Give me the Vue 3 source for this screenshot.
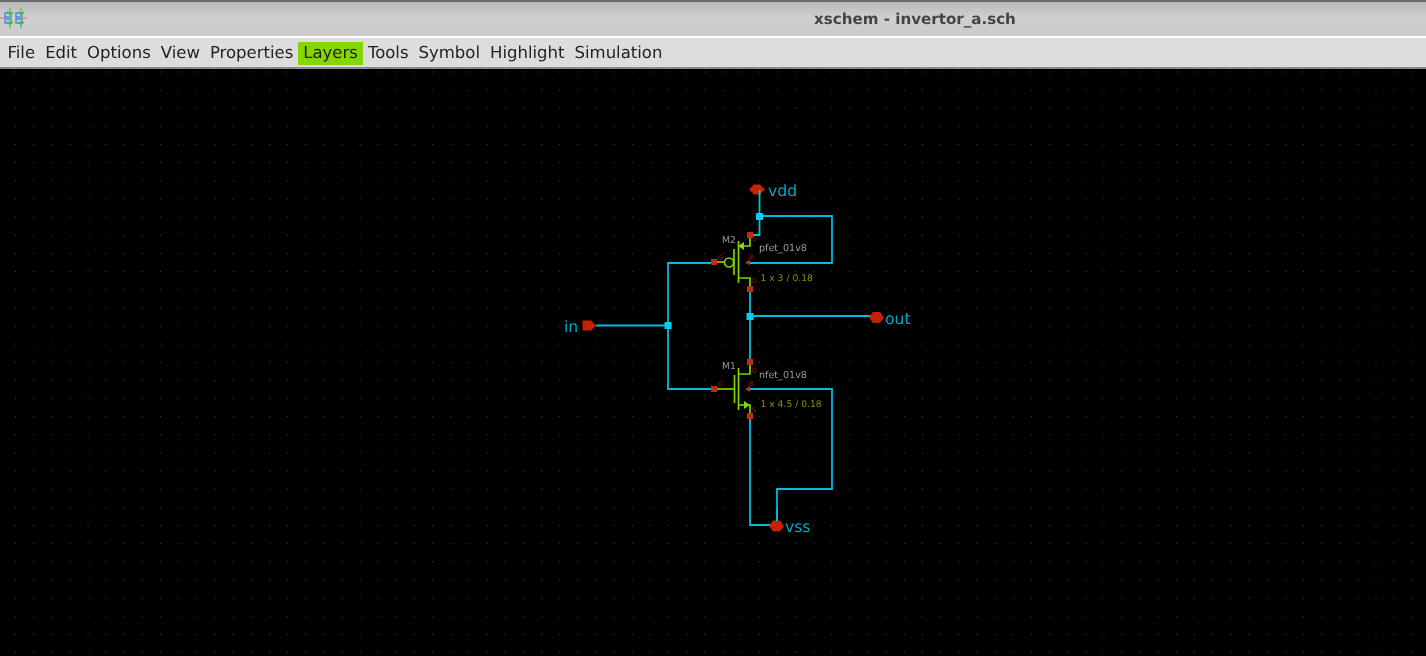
<script setup>
const menus = ['File', 'Edit', 'Options', 'View', 'Properties', 'Layers', 'Tools', 'Symbol', 'Highlight', 'Simulation']

// schematic geometry, in page pixels minus the canvas top (y - 69)
const wires = [
  '759.5,121 759.5,166 750,166',
  '759.5,147 832,147 832,194 750,194',
  '750,220 750,293',
  '750,247 875,247',
  '596,256.5 668,256.5',
  '714,194 668,194 668,320 714,320',
  '750,320 832,320 832,420 777,420 777,456',
  '750,347 750,456 775,456',
]
const junctions = [[759.5, 147.5], [750, 247.5], [668, 256.5]]
const fets = [
  '714,193 724,193',
  '739,177 750,177 750,166',
  '739,209 750,209 750,220',
  '714,320 734,320',
  '739,305 750,305 750,293',
  '739,336 750,336 750,347',
]
const pads = [[750, 166], [750, 220], [714, 193], [750, 293], [750, 347], [714, 320]]
const labels = [
  { x: 722, y: 174, t: 'M2', c: 'tag' },
  { x: 759, y: 182, t: 'pfet_01v8', c: 'part' },
  { x: 760.5, y: 212, t: '1 x 3 / 0.18', c: 'size' },
  { x: 722, y: 300, t: 'M1', c: 'tag' },
  { x: 759, y: 309, t: 'nfet_01v8', c: 'part' },
  { x: 760.5, y: 338, t: '1 x 4.5 / 0.18', c: 'size' },
  { x: 752, y: 172, t: 'S', c: 'pin' },
  { x: 749, y: 190, t: 'B', c: 'pin' },
  { x: 718, y: 191, t: 'G', c: 'pin' },
  { x: 752, y: 214, t: 'D', c: 'pin' },
  { x: 752, y: 304, t: 'D', c: 'pin' },
  { x: 749, y: 317, t: 'B', c: 'pin' },
  { x: 718, y: 317, t: 'G', c: 'pin' },
  { x: 752, y: 343, t: 'S', c: 'pin' },
]
const names = [
  { x: 768, y: 127, t: 'vdd' },
  { x: 885, y: 254.5, t: 'out' },
  { x: 564, y: 263, t: 'in' },
  { x: 785, y: 463, t: 'vss' },
]
</script>

<template>
  <div class="window">
    <header class="titlebar">
      <svg class="logo" width="28" height="20" viewBox="0 0 28 20">
        <path d="M0 10h4M23 10h4" stroke="#e08a80" stroke-width="1.5" fill="none" />
        <path d="M5 5h6v4H5zM5 11h6v4H5zM16 5h6v4h-6zM16 11h6v4h-6z" stroke="#4f86ea" stroke-width="1.4" fill="none" />
        <path d="M10 0v20M21 0v20" stroke="#5fc060" stroke-width="1.5" fill="none" />
        <path d="M7 4l3 2 3-2M7 14l3 2 3-2M18 4l3 2 3-2M18 14l3 2 3-2" stroke="#3fae50" stroke-width="1.3" fill="none" />
      </svg>
      <span class="title">xschem - invertor_a.sch</span>
    </header>
    <nav class="menubar">
      <span v-for="m in menus" :key="m" class="menu" :class="{ active: m === 'Layers' }">{{ m }}</span>
    </nav>
    <svg class="canvas" width="1426" height="587" viewBox="0 0 1426 587">
      <defs>
        <pattern id="grid" x="15" y="2.5" width="18.14" height="18.14" patternUnits="userSpaceOnUse">
          <rect width="1" height="1" fill="#484848" />
        </pattern>
      </defs>
      <rect width="1426" height="587" fill="#000" />
      <rect width="1426" height="587" fill="url(#grid)" />

      <polyline v-for="w in wires" :key="w" :points="w" class="wire" />
      <rect v-for="j in junctions" :key="j[0]" :x="j[0] - 3.5" :y="j[1] - 3.5" width="7" height="7" fill="#00d0f0" />

      <!-- pins -->
      <path d="M749 120.5l5-5h6l5 5-5 5h-6z" fill="#c42200" />
      <path d="M869 248.5l4-5.5h7l4 5.5-4 5.5h-7z" fill="#c42200" />
      <path d="M582.5 251.5h8.5l5 5-5 5h-8.5z" fill="#c42200" />
      <path d="M769 457l4-5.5h7l4 5.5-4 5.5h-7z" fill="#c42200" />
      <polyline points="759.5,121 759.5,126" class="wire" />
      <polyline points="777,440 777,452" class="wire" />

      <!-- transistors -->
      <g class="fet">
        <polyline v-for="f in fets" :key="f" :points="f" />
        <circle cx="729" cy="193.5" r="4.5" />
        <line x1="734" y1="180" x2="734" y2="206" />
        <line x1="738.5" y1="172" x2="738.5" y2="214" />
        <line x1="734.5" y1="306" x2="734.5" y2="334" />
        <line x1="738.5" y1="299" x2="738.5" y2="341" />
      </g>
      <path d="M738 177l6-4v8z" fill="#7fdc00" />
      <path d="M750 336l-6-4v8z" fill="#7fdc00" />
      <rect v-for="p in pads" :key="p.join()" :x="p[0] - 3" :y="p[1] - 3" width="6" height="6" fill="#c02c10" />
      <path d="M745 193.5l5-3v6z" fill="#c02c10" />
      <path d="M745 320l5-3v6z" fill="#c02c10" />

      <text v-for="l in labels" :key="l.x + l.t + l.y" :x="l.x" :y="l.y" :class="l.c">{{ l.t }}</text>
      <text v-for="n in names" :key="n.t" :x="n.x" :y="n.y" class="net">{{ n.t }}</text>
    </svg>
  </div>
</template>

<style scoped>
.window {
  width: 1426px;
  height: 656px;
  overflow: hidden;
  display: flex;
  flex-direction: column;
  font-family: "DejaVu Sans", sans-serif;
  text-rendering: geometricPrecision;
  filter: blur(0.35px);
}

.titlebar {
  position: relative;
  box-sizing: border-box;
  height: 36px;
  flex: none;
  display: flex;
  align-items: center;
  justify-content: center;
  padding-left: 404px;
  border-top: 2px solid #6a6a6a;
  background: linear-gradient(#b9b9b9, #cfcfcf 45%, #cbcbcb);
}

.logo {
  position: absolute;
  left: 0;
  top: 6px;
}

.title {
  color: #444;
  font-size: 15.1px;
  font-weight: 700;
}

.menubar {
  box-sizing: border-box;
  height: 33px;
  flex: none;
  display: flex;
  align-items: center;
  padding: 1px 0 0 2.5px;
  border-top: 2px solid #fff;
  border-bottom: 2px solid #8a8a8a;
  background: #dedcde;
}

.menu {
  padding: 2px 5px 3px;
  color: #222;
  font-size: 16.5px;
  line-height: 18px;
}

.menu.active {
  background: #84d800;
}

.canvas {
  display: block;
  flex: none;
}

.wire {
  fill: none;
  stroke: #00bcdc;
  stroke-width: 1.8;
}

.fet {
  fill: none;
  stroke: #7fd400;
  stroke-width: 1.7;
}

.tag {
  fill: #9a9a9a;
  font-size: 9.3px;
}

.part {
  fill: #9a9a9a;
  font-size: 9.6px;
}

.size {
  fill: #8f8f00;
  font-size: 9.2px;
}

.pin {
  fill: #a01808;
  font-size: 6.5px;
}

.net {
  fill: #00a8c8;
  font-size: 15.6px;
}
</style>

<style>
html,
body {
  background: #000;
}
</style>
